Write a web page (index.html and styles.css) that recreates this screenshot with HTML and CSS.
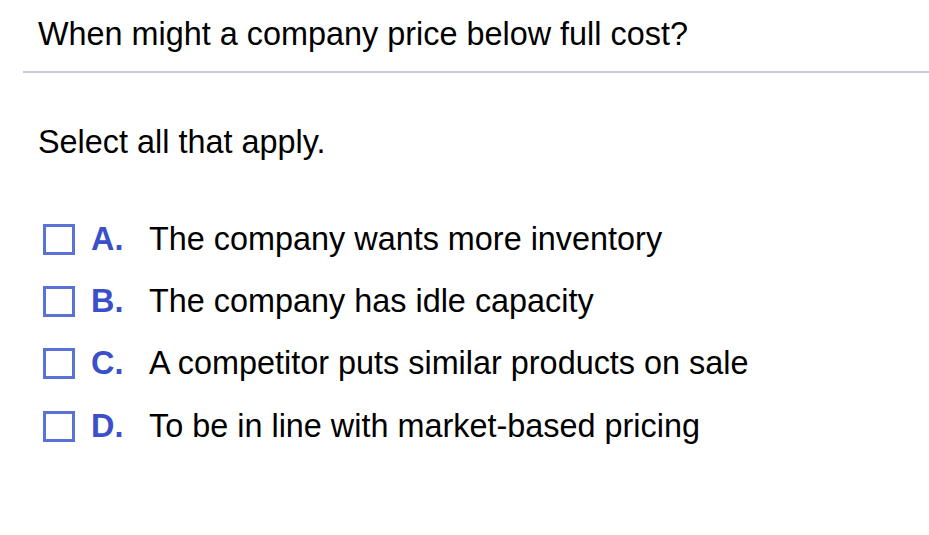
FILE: index.html
```html
<!DOCTYPE html>
<html>
<head>
<meta charset="utf-8">
<link rel="stylesheet" href="styles.css">
</head>
<body>
<div class="page">
  <div class="question">When might a company price below full cost?</div>
  <div class="rule"></div>
  <div class="instruction">Select all that apply.</div>
  <ul class="options">
    <li class="option"><span class="box"></span><span class="letter">A.</span><span class="text">The company wants more inventory</span></li>
    <li class="option"><span class="box"></span><span class="letter">B.</span><span class="text">The company has idle capacity</span></li>
    <li class="option"><span class="box"></span><span class="letter">C.</span><span class="text">A competitor puts similar products on sale</span></li>
    <li class="option"><span class="box"></span><span class="letter">D.</span><span class="text">To be in line with market-based pricing</span></li>
  </ul>
</div>
</body>
</html>
```
FILE: styles.css
```css
html, body {
  margin: 0;
  padding: 0;
  background: #ffffff;
}
body {
  font-family: "Liberation Sans", Arial, sans-serif;
  color: #000000;
}
.page {
  padding-left: 23px;
}
.question {
  font-size: 32.4px;
  line-height: 36px;
  padding: 16px 0 0 15px;
  height: 55px;
  box-sizing: border-box;
}
.rule {
  height: 2px;
  margin-top: 16px;
  background: #c8cad8;
}
.instruction {
  font-size: 32.4px;
  line-height: 36px;
  padding-left: 15px;
  margin-top: 51px;
}
.options {
  list-style: none;
  margin: 48px 0 0 0;
  padding: 0 0 0 20px;
}
.option {
  display: flex;
  align-items: center;
  height: 62.3px;
}
.box {
  width: 26px;
  height: 25px;
  border: 3px solid #5a72d8;
  flex: none;
}
.letter {
  font-size: 32.4px;
  font-weight: bold;
  color: #3b50c8;
  width: 58px;
  padding-left: 16px;
  flex: none;
}
.text {
  font-size: 32.4px;
}
```
